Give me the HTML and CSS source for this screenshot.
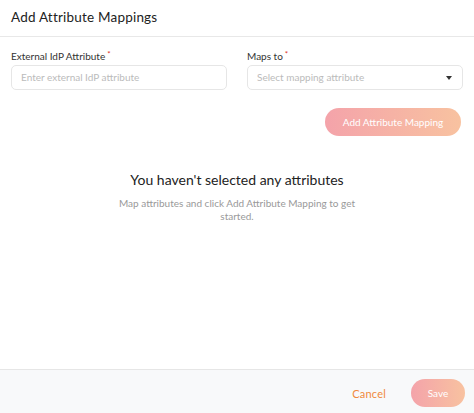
FILE: index.html
```html
<!DOCTYPE html>
<html>
<head>
<meta charset="utf-8">
<link rel="stylesheet" href="styles.css">
</head>
<body>
<div class="modal">
  <div class="header">Add Attribute Mappings</div>
  <div class="body">
    <div class="fields">
      <div class="field">
        <label class="label">External IdP Attribute<span class="req">*</span></label>
        <div class="input placeholder">Enter external IdP attribute</div>
      </div>
      <div class="field">
        <label class="label">Maps to<span class="req">*</span></label>
        <div class="input select placeholder">
          <span>Select mapping attribute</span>
          <svg class="caret" width="6" height="4" viewBox="0 0 6 4"><path d="M0 0 L6 0 L3 4 Z" fill="#333"/></svg>
        </div>
      </div>
    </div>
    <div class="actions">
      <button class="btn primary add">Add Attribute Mapping</button>
    </div>
    <div class="empty">
      <div class="empty-title">You haven't selected any attributes</div>
      <div class="empty-text">Map attributes and click Add Attribute Mapping to get started.</div>
    </div>
  </div>
  <div class="footer">
    <button class="btn link">Cancel</button>
    <button class="btn primary save">Save</button>
  </div>
</div>
</body>
</html>
```

FILE: styles.css
```css
* { box-sizing: border-box; }
html, body { margin: 0; padding: 0; background: #fff; }
body { font-family: "Lato", "Inter", sans-serif; color: #222; }
.modal { width: 474px; height: 413px; display: flex; flex-direction: column; overflow: hidden; }
.header {
  height: 37px;
  padding: 8px 11px 0;
  font-size: 13.5px;
  line-height: 18px;
  color: #222;
  border-bottom: 1px solid #e8e8e8;
  letter-spacing: 0.2px;
}
.body { flex: 1; padding: 13px 11px 0; }
.fields { display: grid; grid-template-columns: 216px 216px; column-gap: 20px; }
.field { display: flex; flex-direction: column; }
.label { font-size: 10px; color: #333; height: 15px; line-height: 12px; }
.req { color: #e0301e; font-size: 8px; vertical-align: top; margin-left: 2px; line-height: 8px; }
.input {
  height: 25px;
  border: 1px solid #e6e6e6;
  border-radius: 5px;
  padding: 0 9px;
  font-size: 10px;
  line-height: 23px;
  color: #bbb;
}
.select { display: flex; align-items: center; justify-content: space-between; padding-right: 10px; }
.caret { display: block; }
.actions { display: flex; justify-content: flex-end; padding-top: 18px; padding-right: 2px; }
.btn { font-family: inherit; border: 0; cursor: pointer; }
.primary {
  background: linear-gradient(90deg, #f4a3aa 0%, #f8c2a0 100%);
  color: #fff;
  border-radius: 15px;
  font-size: 10px;
}
.add { width: 136px; height: 28px; }
.empty { text-align: center; padding-top: 35px; }
.empty-title { font-size: 14px; color: #222; line-height: 18px; }
.empty-text { font-size: 10px; color: #999; line-height: 13px; margin: 8px auto 0; width: 260px; }
.footer {
  height: 44px;
  flex: none;
  background: #f8f9fa;
  border-top: 1px solid #e6e6e6;
  display: flex;
  align-items: flex-start;
  justify-content: flex-end;
  padding: 9px 9px 0 0;
  gap: 25px;
}
.link { background: none; color: #f08a3c; font-size: 11px; padding: 0; height: 28px; letter-spacing: 0.2px; }
.save { width: 54px; height: 28px; }
```
